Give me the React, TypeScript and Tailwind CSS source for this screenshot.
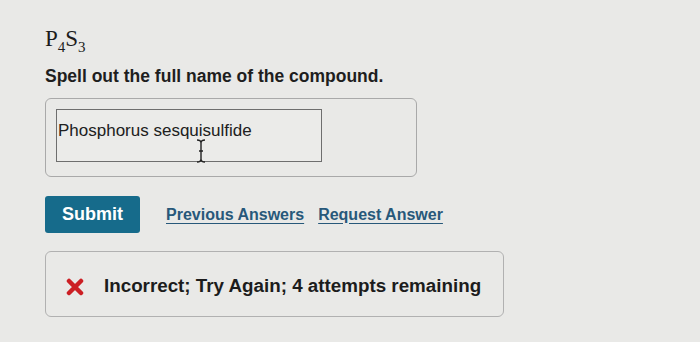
import React from "react";

export default function App() {
  return (
    <div
      className="w-[700px] h-[342px] bg-[#e9e9e7] pl-[45px] pt-[26px] text-[#222]"
      style={{ fontFamily: '"Liberation Sans", Arial, sans-serif' }}
    >
      {/* Formula */}
      <div
        className="text-[23px] leading-[26px] text-[#1c1c1c]"
        style={{ fontFamily: '"Liberation Serif", "Times New Roman", serif' }}
      >
        P<sub className="text-[15px] align-[-2px]">4</sub>S<sub className="text-[15px] align-[-2px]">3</sub>
      </div>

      {/* Prompt */}
      <p className="mt-[13px] text-[17.5px] leading-[22px] font-bold text-[#1e1e1e]">
        Spell out the full name of the compound.
      </p>

      {/* Answer box */}
      <div className="mt-[11px] w-[372px] h-[79px] rounded-[6px] border border-[#a9a9a9] pl-[10px] pt-[10px]">
        <div className="relative w-[266px] h-[53px] border border-[#6e6e6e] bg-[#ebebe9] pl-[1px] pt-[9px]">
          <span className="text-[17px] leading-[20px] text-[#202020]">Phosphorus sesquisulfide</span>
          <svg className="absolute left-[139px] top-[29px]" width="10" height="24" viewBox="0 0 10 24">
            <path d="M1 1 Q5 1 5 4 L5 20 Q5 23 1 23 M9 1 Q5 1 5 4 M5 20 Q5 23 9 23 M3 12 L7 12" stroke="#222" strokeWidth="1.4" fill="none" />
          </svg>
        </div>
      </div>

      {/* Actions */}
      <div className="mt-[19px] flex items-center">
        <button className="w-[95px] h-[37px] rounded-[3px] bg-[#166b8b] text-white text-[18px] font-bold">
          Submit
        </button>
        <a className="ml-[26px] text-[16px] font-bold text-[#27587a] underline underline-offset-[3px]">
          Previous Answers
        </a>
        <a className="ml-[14px] text-[16px] font-bold text-[#27587a] underline underline-offset-[3px]">
          Request Answer
        </a>
      </div>

      {/* Feedback */}
      <div className="mt-[18px] w-[459px] h-[66px] rounded-[6px] border border-[#b1b1b1] flex items-center pl-[20px] pt-[5px]">
        <svg width="18" height="18" viewBox="0 0 18 18" className="shrink-0">
          <path d="M3 3 L15 15 M15 3 L3 15" stroke="#cc1f24" strokeWidth="4.5" strokeLinecap="round" />
        </svg>
        <span className="ml-[20px] text-[18.8px] font-bold text-[#1c1c1c]">
          Incorrect; Try Again; 4 attempts remaining
        </span>
      </div>
    </div>
  );
}
